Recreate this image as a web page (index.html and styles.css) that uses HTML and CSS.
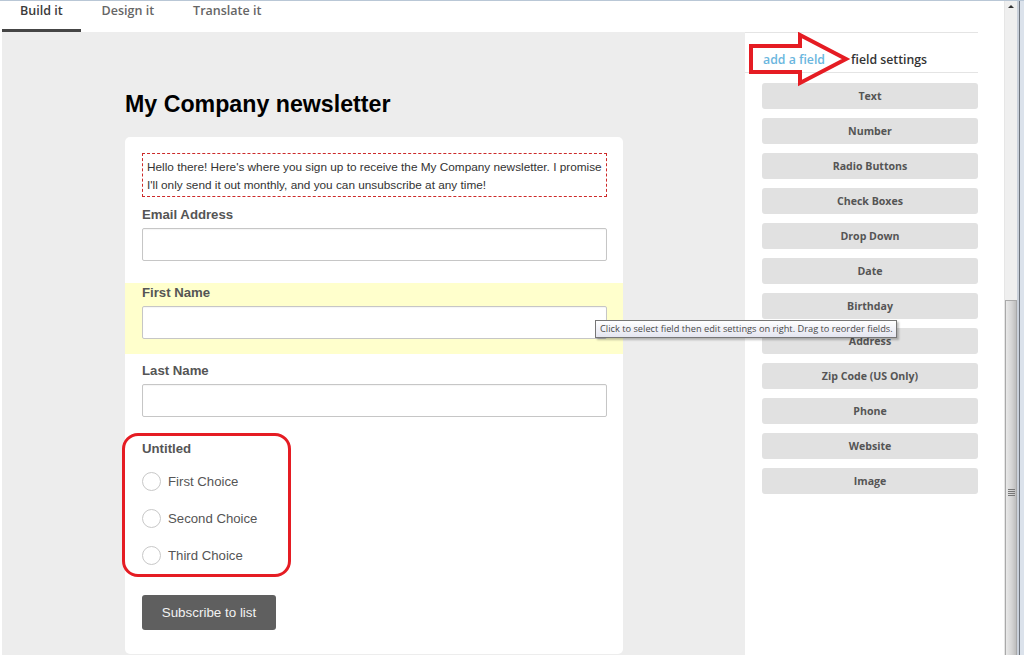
FILE: index.html
```html
<!DOCTYPE html>
<html lang="en">
<head>
<meta charset="utf-8">
<title>Form builder</title>
<link rel="stylesheet" href="styles.css">
</head>
<body>
<div class="window">
  <div class="page">
    <nav class="tabs">
      <a class="tab active">Build it</a>
      <a class="tab">Design it</a>
      <a class="tab">Translate it</a>
    </nav>
    <div class="workspace">
      <main class="canvas">
        <h1 class="title">My Company newsletter</h1>
        <form class="card">
          <div class="intro">Hello there! Here's where you sign up to receive the My Company newsletter. I promise I'll only send it out monthly, and you can unsubscribe at any time!</div>
          <div class="field">
            <label class="label">Email Address</label>
            <div class="input"></div>
          </div>
          <div class="field highlight">
            <label class="label">First Name</label>
            <div class="input"></div>
          </div>
          <div class="field">
            <label class="label">Last Name</label>
            <div class="input"></div>
          </div>
          <div class="field radio-field">
            <label class="label">Untitled</label>
            <div class="radios">
              <div class="radio"><span class="circle"></span><span>First Choice</span></div>
              <div class="radio"><span class="circle"></span><span>Second Choice</span></div>
              <div class="radio"><span class="circle"></span><span>Third Choice</span></div>
            </div>
          </div>
          <div class="actions"><button type="button" class="submit">Subscribe to list</button></div>
          <div class="annot-box"></div>
        </form>
      </main>
      <aside class="sidebar">
        <div class="side-inner">
          <div class="side-head">
            <span class="side-tab add">add a field</span>
            <span class="side-tab settings">field settings</span>
          </div>
          <div class="palette">
            <div class="pbtn">Text</div>
            <div class="pbtn">Number</div>
            <div class="pbtn">Radio Buttons</div>
            <div class="pbtn">Check Boxes</div>
            <div class="pbtn">Drop Down</div>
            <div class="pbtn">Date</div>
            <div class="pbtn">Birthday</div>
            <div class="pbtn">Address</div>
            <div class="pbtn">Zip Code (US Only)</div>
            <div class="pbtn">Phone</div>
            <div class="pbtn">Website</div>
            <div class="pbtn">Image</div>
          </div>
        </div>
        <svg class="annot-arrow" width="110" height="60" viewBox="0 0 110 60">
          <path d="M55 14 L6 14 L6 40 L55 40 L55 51 L101 27 L55 3 Z" fill="none" stroke="#e51c23" stroke-width="4" stroke-linejoin="miter"/>
        </svg>
      </aside>
    </div>
  </div>
  <div class="scrollbar">
    <div class="sb-track">
      <div class="sb-up"></div>
    </div>
    <div class="sb-thumb"><div class="sb-grip"></div></div>
  </div>
  <div class="frame"></div>
  <div class="tooltip">Click to select field then edit settings on right. Drag to reorder fields.</div>
</div>
</body>
</html>
```
FILE: styles.css
```css
* { box-sizing: border-box; }
html, body { margin: 0; padding: 0; }
body { background: #fff; font-family: "Liberation Sans", Arial, sans-serif; overflow: hidden; }

.window {
  position: relative;
  width: 1024px;
  height: 655px;
  display: flex;
  border-top: 1px solid #b9c7d6;
  overflow: hidden;
}

.page {
  width: 1004px;
  display: flex;
  flex-direction: column;
  padding-left: 2px;
}

/* tabs */
.tabs {
  height: 31px;
  display: flex;
  gap: 3px;
  background: #fff;
}
.tab {
  font-family: "Open Sans", sans-serif;
  font-weight: 600;
  font-size: 12.5px;
  color: #666;
  padding: 0 18px;
  line-height: 20px;
  border-bottom: 3px solid transparent;
  height: 31px;
  display: block;
}
.tab.active { color: #3a3a3a; border-bottom-color: #454545; }

.workspace {
  flex: 1;
  display: flex;
  min-height: 0;
}

/* canvas */
.canvas {
  width: 743px;
  background: #ededed;
  padding: 59px 0 0 123px;
}
.title {
  margin: 0 0 20px;
  font-size: 23.2px;
  line-height: 26px;
  font-weight: bold;
  color: #000;
}
.card {
  position: relative;
  width: 498px;
  background: #fff;
  border-radius: 5px;
  padding: 16px 0 24px;
  display: flex;
  flex-direction: column;
  gap: 7px;
}
.intro {
  margin: 0 16px 1px 17px;
  border: 1px dashed #cc2a2a;
  padding: 4px 2px 2px 4px;
  font-size: 11.8px;
  line-height: 18px;
  color: #333;
}
.field {
  padding: 2px 16px 15px 17px;
}
.field.highlight { background: #ffffcc; }
.label {
  display: block;
  font-size: 13.2px;
  line-height: 16px;
  font-weight: bold;
  color: #555;
  margin-bottom: 5px;
}
.input {
  height: 33px;
  border: 1px solid #c6c6c6;
  border-radius: 2px;
  background: #fff;
  box-shadow: inset 0 1px 1px rgba(0,0,0,0.04);
}
.radio-field { padding-bottom: 14px; }
.radios { margin-top: 6px; }
.radio {
  height: 37px;
  display: flex;
  align-items: center;
  gap: 7px;
  font-size: 13.2px;
  color: #555;
}
.circle {
  width: 19px;
  height: 19px;
  border-radius: 50%;
  border: 1.5px solid #c8c8c8;
  background: #fff;
}
.actions { padding-left: 17px; }
.submit {
  width: 134px;
  height: 35px;
  border: 0;
  border-radius: 3px;
  background: #5f5f5f;
  color: #f2f2f2;
  font-family: "Liberation Sans", Arial, sans-serif;
  font-size: 13.4px;
  padding: 0;
}
.annot-box {
  position: absolute;
  left: -3px;
  top: 296px;
  width: 169px;
  height: 144px;
  border: 3.5px solid #e51c23;
  border-radius: 16px;
}

/* sidebar */
.sidebar {
  position: relative;
  width: 259px;
  background: #fff;
  padding-right: 26px;
}
.side-inner { border-top: 1px solid #e4e4e4; }
.side-head {
  display: flex;
  gap: 26px;
  padding: 18px 0 3px 18px;
  border-bottom: 1px solid #e4e4e4;
  font-family: "Open Sans", sans-serif;
  font-weight: 600;
  font-size: 12.3px;
  line-height: 18px;
}
.side-tab.add { color: #6ab6de; }
.side-tab.settings { color: #333; }
.palette {
  padding: 10px 0 0 17px;
  display: flex;
  flex-direction: column;
  gap: 9px;
}
.pbtn {
  height: 26px;
  background: #e1e1e1;
  border-radius: 3px;
  text-align: center;
  font-family: "Open Sans", sans-serif;
  font-weight: 700;
  font-size: 10.6px;
  line-height: 26px;
  color: #555;
}
.annot-arrow {
  position: absolute;
  left: 0px;
  top: 0px;
}

/* scrollbar + frame */
.scrollbar {
  width: 13px;
  display: flex;
  flex-direction: column;
  background: #efefef;
  border-left: 1px solid #e6e6e6;
}
.sb-track { height: 299px; position: relative; }
.sb-up {
  position: absolute;
  left: 3px;
  top: 4px;
  width: 0; height: 0;
  border-left: 3px solid transparent;
  border-right: 3px solid transparent;
  border-bottom: 3px solid #333;
}
.sb-thumb {
  flex: 1;
  background: linear-gradient(to right, #e9e9e9, #d3d3d3 60%, #bdbdbd);
  border: 1px solid #a9a9a9;
  border-bottom: 0;
  display: flex;
  justify-content: center;
  padding-top: 188px;
}
.sb-grip {
  width: 7px;
  height: 7px;
  background: repeating-linear-gradient(to bottom, #777 0 1px, transparent 1px 2px);
}
.frame {
  width: 7px;
  background: linear-gradient(to right, #c9d0da 0 2px, #6d737c 2px 3px, #dbe2eb 3px);
}

.tooltip {
  position: absolute;
  left: 595px;
  top: 319px;
  width: 302px;
  height: 18px;
  border: 1px solid #767676;
  background: linear-gradient(#ffffff, #e4e5f0);
  box-shadow: 2px 2px 2px rgba(0,0,0,0.25);
  font-family: "Open Sans", sans-serif;
  font-size: 9.25px;
  line-height: 16px;
  color: #4a4a4a;
  padding-left: 4px;
  white-space: nowrap;
}
```
